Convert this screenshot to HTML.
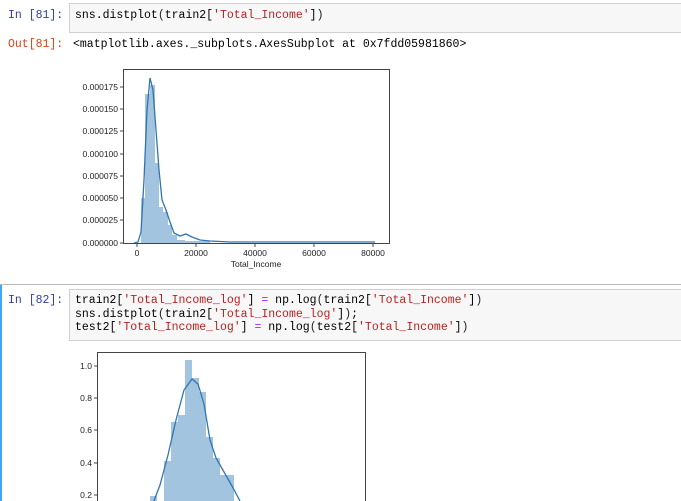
<!DOCTYPE html>
<html><head><meta charset="utf-8"><style>
body{margin:0;width:681px;height:501px;overflow:hidden;background:#fff;font-family:"Liberation Mono",monospace;font-size:11.5px;position:relative}
.p{position:absolute;white-space:pre}
.in{color:#303F9F}.out{color:#D84315}
.box{position:absolute;background:#f7f7f7;border:1px solid #cfcfcf;border-right:none}
.s{color:#BA2121}.o{color:#AA22FF}.g{color:#222}
svg text{font-family:"Liberation Sans",sans-serif;font-size:8.5px;fill:#222}
</style></head><body>
<div class="p in" style="left:8px;top:9px">In [81]:</div>
<div class="box" style="left:69px;top:3px;width:612px;height:28px"></div>
<div class="p" style="left:75px;top:9px">sns.distplot<span class="g">(</span>train2[<span class="s">'Total_Income'</span>]<span class="g">)</span></div>
<div class="p out" style="left:8px;top:38px">Out[81]:</div>
<div class="p" style="left:73px;top:38px">&lt;matplotlib.axes._subplots.AxesSubplot at 0x7fdd05981860&gt;</div>

<svg style="position:absolute;left:0;top:0" width="681" height="501">
<g fill="#a2c4de">
<rect x="141" y="198" width="4" height="45"/><rect x="145" y="94" width="5" height="149"/><rect x="150" y="85" width="5" height="158"/><rect x="155" y="163" width="4" height="80"/><rect x="159" y="207" width="4" height="36"/><rect x="163" y="212" width="5" height="31"/><rect x="168" y="225" width="4" height="18"/><rect x="172" y="235" width="5" height="8"/><rect x="177" y="240" width="8" height="3"/><rect x="185" y="241" width="25" height="2"/>
</g>
<path d="M134 243 L138 242 L141 232 L144 180 L147 110 L150 78 L153 90 L156 130 L159 170 L162 200 L166 210 L170 222 L174 233 L180 236 L186 234 L192 237 L200 240 L210 241 L230 242 L280 242 L375 242" fill="none" stroke="#3274b0" stroke-width="1.3"/>
<rect x="123.5" y="69.5" width="266" height="174" fill="none" stroke="#444" stroke-width="1"/>
<g stroke="#444"><line x1="120" y1="87" x2="123" y2="87"/><line x1="120" y1="109" x2="123" y2="109"/><line x1="120" y1="131" x2="123" y2="131"/><line x1="120" y1="154" x2="123" y2="154"/><line x1="120" y1="176" x2="123" y2="176"/><line x1="120" y1="198" x2="123" y2="198"/><line x1="120" y1="220" x2="123" y2="220"/><line x1="120" y1="243" x2="123" y2="243"/>
<line x1="137" y1="244" x2="137" y2="247"/><line x1="196" y1="244" x2="196" y2="247"/><line x1="255" y1="244" x2="255" y2="247"/><line x1="314" y1="244" x2="314" y2="247"/><line x1="373" y1="244" x2="373" y2="247"/></g>
<g text-anchor="end"><text x="118" y="90">0.000175</text><text x="118" y="112">0.000150</text><text x="118" y="134">0.000125</text><text x="118" y="157">0.000100</text><text x="118" y="179">0.000075</text><text x="118" y="201">0.000050</text><text x="118" y="223">0.000025</text><text x="118" y="246">0.000000</text></g>
<g text-anchor="middle"><text x="137" y="256">0</text><text x="196" y="256">20000</text><text x="255" y="256">40000</text><text x="314" y="256">60000</text><text x="373" y="256">80000</text><text x="256" y="267">Total_Income</text></g>

<line x1="0" y1="284.5" x2="681" y2="284.5" stroke="#bbb"/>
<rect x="0" y="285" width="2" height="216" fill="#42A5F5"/>
</svg>

<div class="p in" style="left:8px;top:294px">In [82]:</div>
<div class="box" style="left:69px;top:289px;width:612px;height:50px"></div>
<div class="p" style="left:75px;top:294px;line-height:13.5px">train2[<span class="s">'Total_Income_log'</span>] <span class="o">=</span> np.log<span class="g">(</span>train2[<span class="s">'Total_Income'</span>]<span class="g">)</span>
sns.distplot<span class="g">(</span>train2[<span class="s">'Total_Income_log'</span>]<span class="g">)</span>;
test2[<span class="s">'Total_Income_log'</span>] <span class="o">=</span> np.log<span class="g">(</span>test2[<span class="s">'Total_Income'</span>]<span class="g">)</span></div>

<svg style="position:absolute;left:0;top:0" width="681" height="501">
<g fill="#a2c4de">
<rect x="150" y="496" width="7" height="10"/><rect x="164" y="461" width="7" height="45"/><rect x="171" y="422" width="7" height="84"/><rect x="178" y="415" width="7" height="91"/><rect x="185" y="360" width="7" height="146"/><rect x="192" y="378" width="7" height="128"/><rect x="199" y="392" width="7" height="114"/><rect x="206" y="437" width="7" height="69"/><rect x="213" y="458" width="7" height="48"/><rect x="220" y="475" width="7" height="31"/><rect x="227" y="475" width="7" height="31"/>
</g>
<path d="M152 506 L160 485 L168 455 L176 420 L184 390 L192 379 L198 384 L204 404 L210 440 L216 458 L224 472 L232 486 L240 501" fill="none" stroke="#3274b0" stroke-width="1.3"/>
<rect x="97.5" y="352.5" width="268" height="160" fill="none" stroke="#444" stroke-width="1"/>
<g stroke="#444"><line x1="94" y1="366" x2="97" y2="366"/><line x1="94" y1="398" x2="97" y2="398"/><line x1="94" y1="430" x2="97" y2="430"/><line x1="94" y1="463" x2="97" y2="463"/><line x1="94" y1="495" x2="97" y2="495"/></g>
<g text-anchor="end"><text x="92" y="369">1.0</text><text x="92" y="401">0.8</text><text x="92" y="433">0.6</text><text x="92" y="466">0.4</text><text x="92" y="498">0.2</text></g>
</svg>
</body></html>
